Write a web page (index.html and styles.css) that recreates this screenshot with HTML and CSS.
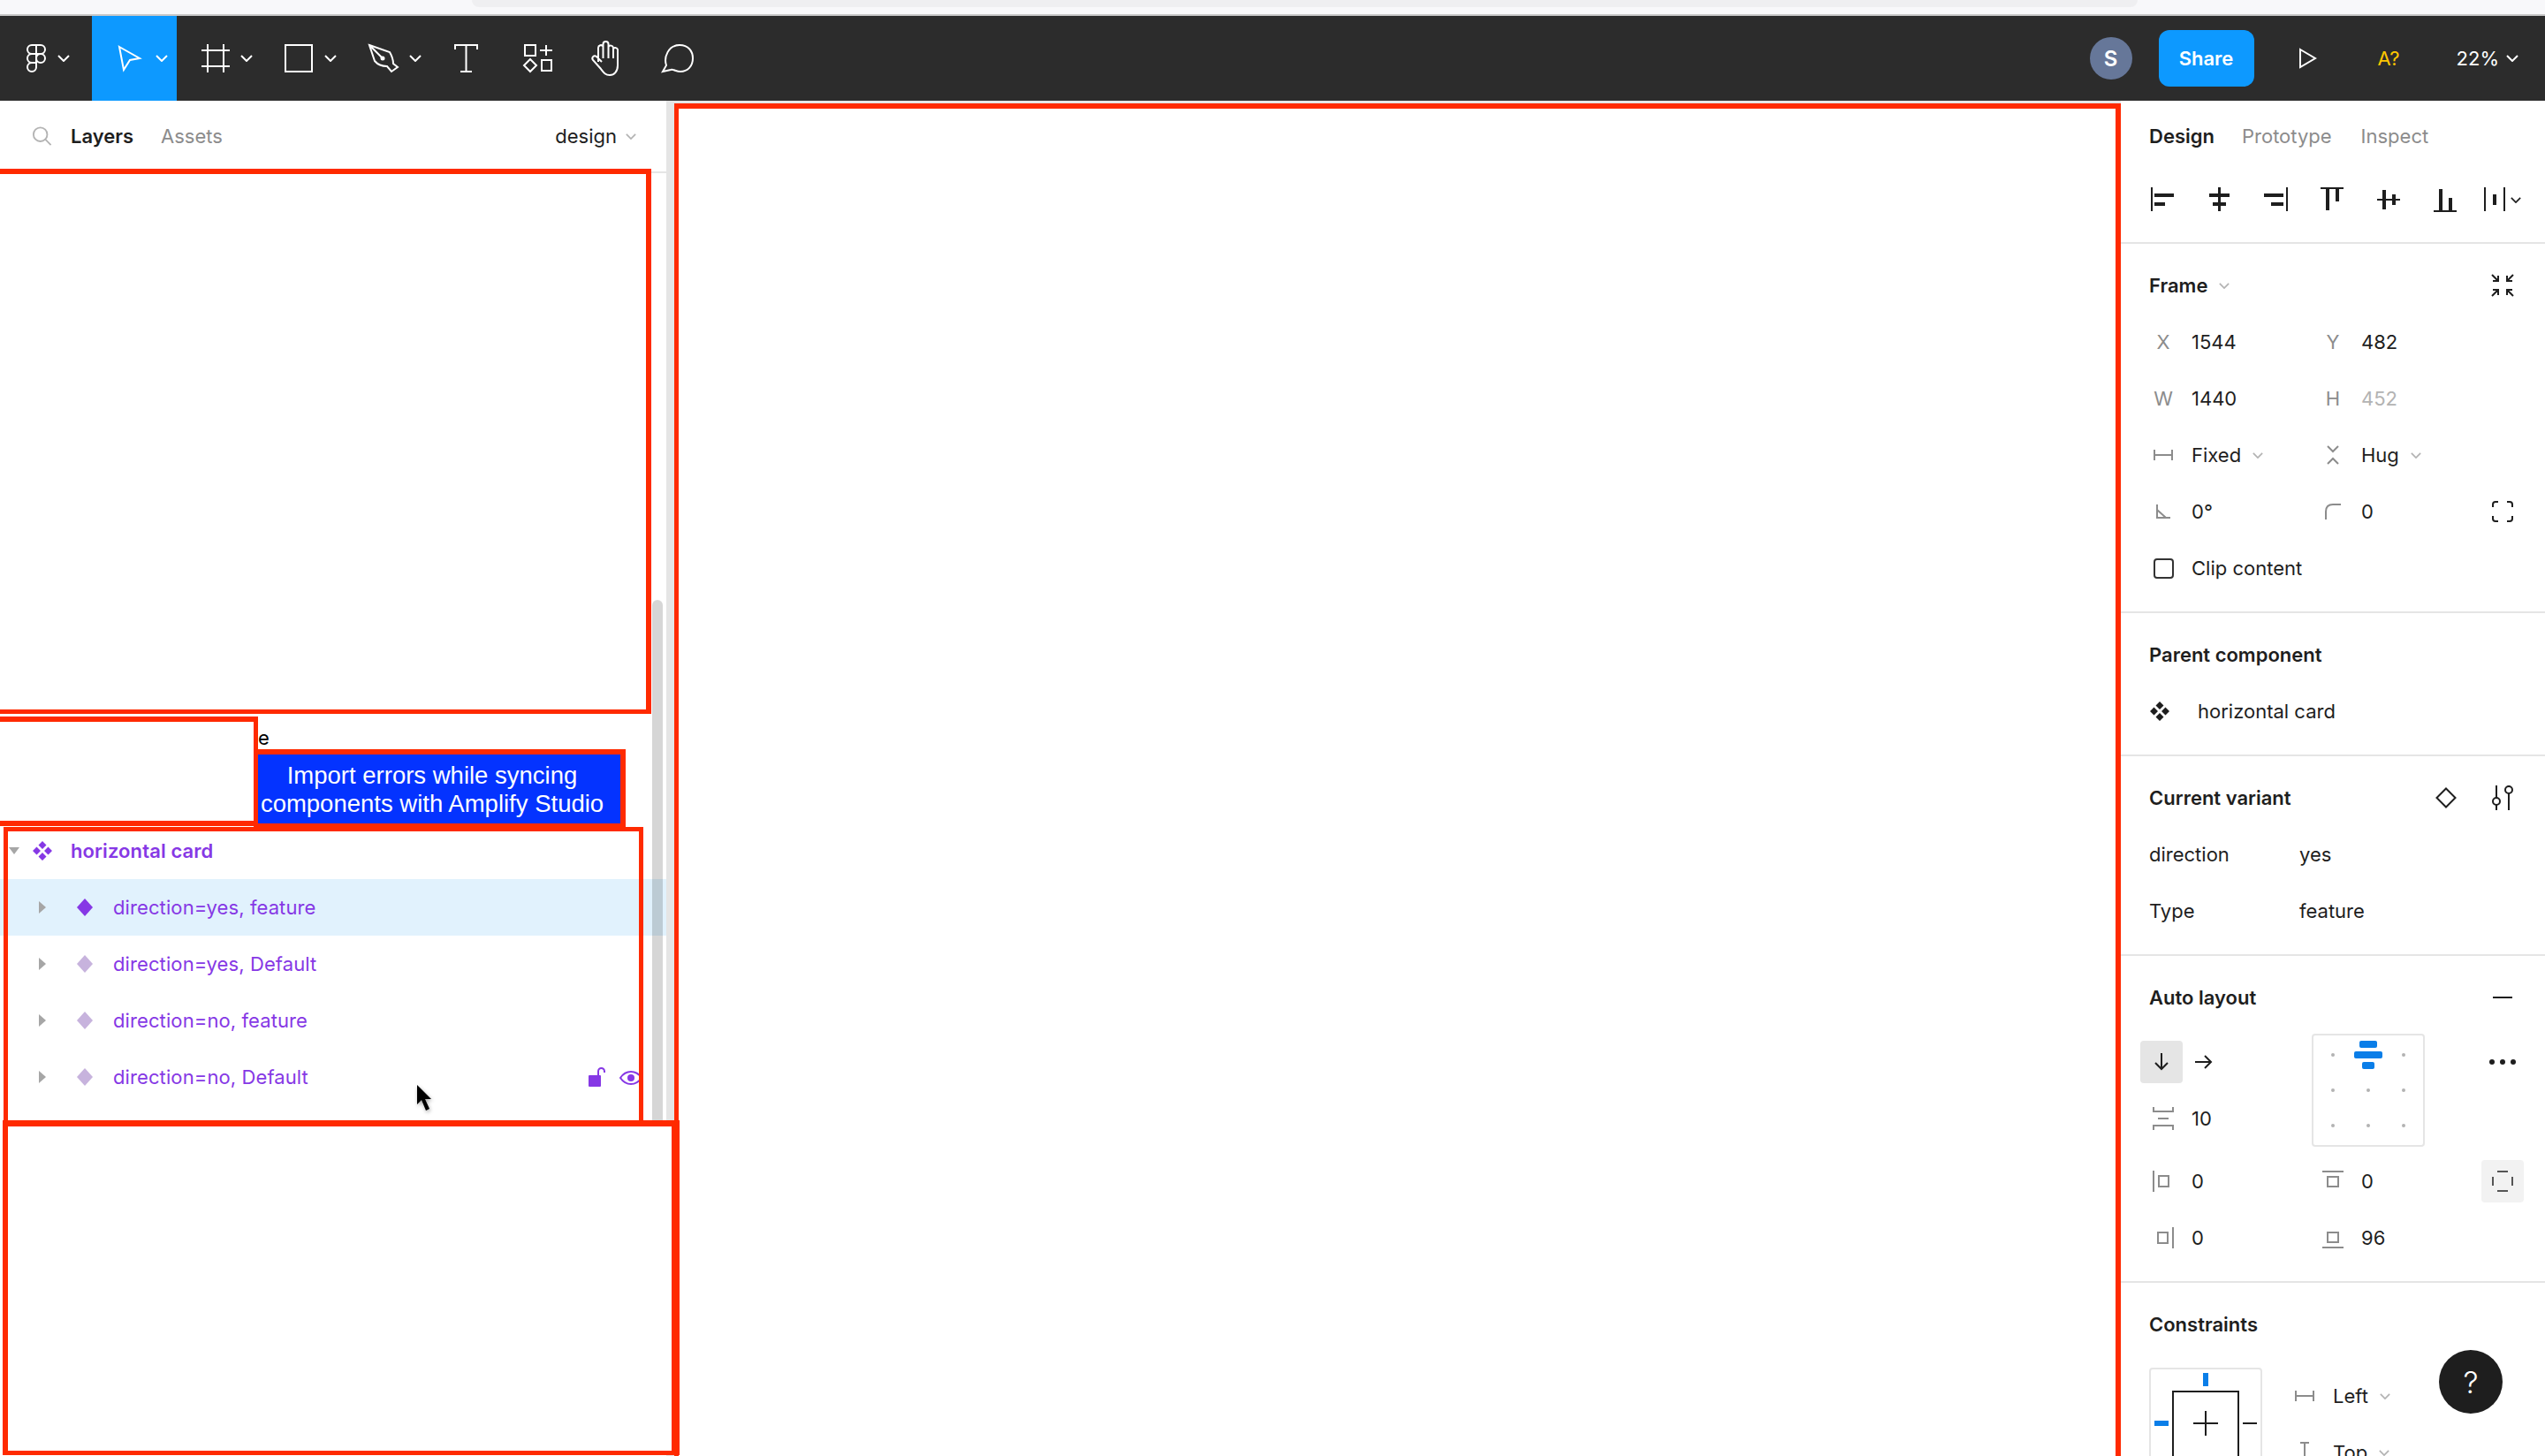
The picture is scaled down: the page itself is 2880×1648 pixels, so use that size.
FILE: index.html
```html
<!DOCTYPE html>
<html lang="en">
<head>
<meta charset="utf-8">
<title>Figma</title>
<link rel="stylesheet" href="styles.css">
</head>
<body>
<svg class="defs" width="0" height="0" aria-hidden="true">
  <symbol id="chev" viewBox="0 0 14 8"><path d="M1 1l6 6 6-6" fill="none" stroke="currentColor" stroke-width="2"/></symbol>
  <symbol id="tri-right" viewBox="0 0 8 14"><path d="M0 0l8 7-8 7z" fill="#a6a6a6"/></symbol>
  <symbol id="diamond" viewBox="0 0 20 20"><path d="M10 0l9 10-9 10-9-10z" fill="currentColor"/></symbol>
  <symbol id="comp" viewBox="0 0 22 22"><path d="M11 0l4.500 4.500L11 9 6.500 4.500zM11 13l4.500 4.500L11 22l-4.500-4.500zM4.500 6.500L9 11l-4.500 4.500L0 11zM17.500 6.500L22 11l-4.500 4.500L13 11z" fill="currentColor"/></symbol>
  <symbol id="hbar" viewBox="0 0 22 12"><path d="M1 0v12M21 0v12M1 6h20" fill="none" stroke="#8c8c8c" stroke-width="2"/></symbol>
</svg>
<div class="page">
  <div class="chrome"><div class="chrome-tab"></div></div>
  <header class="toolbar">
    <div class="tool tool-logo">
      <svg class="ic-logo" viewBox="0 0 24 32" fill="none" stroke="#fff" stroke-width="2"><path d="M12 1H7a5 5 0 0 0 0 10h5zM12 1h5a5 5 0 0 1 0 10h-5zM12 11H7a5 5 0 0 0 0 10h5zM12 21H7a5 5 0 1 0 5 5z"/><circle cx="17" cy="16" r="5"/></svg>
      <svg class="chev-w"><use href="#chev"/></svg>
    </div>
    <div class="tool tool-select">
      <svg class="ic-select" viewBox="0 0 26 30" fill="none" stroke="#fff" stroke-width="2"><path d="M1 2l23 13-11 2-7 11z"/></svg>
      <svg class="chev-w"><use href="#chev"/></svg>
    </div>
    <div class="tool tool-frame">
      <svg class="ic32" viewBox="0 0 32 32" fill="none" stroke="#fff" stroke-width="2"><path d="M7 0v32M25 0v32M0 7h32M0 25h32"/></svg>
      <svg class="chev-w"><use href="#chev"/></svg>
    </div>
    <div class="tool tool-rect">
      <svg class="ic32" viewBox="0 0 32 32" fill="none" stroke="#fff" stroke-width="2"><rect x="1" y="1" width="30" height="30"/></svg>
      <svg class="chev-w"><use href="#chev"/></svg>
    </div>
    <div class="tool tool-pen">
      <svg class="ic-pen" viewBox="0 0 34 32" fill="none" stroke="#fff" stroke-width="2"><path d="M1 1l23 8q4 7 4 13l5 4-7 5-5-6q-9 0-14-6zM1 1l14 14"/><circle cx="16" cy="16" r="2.500" fill="#fff" stroke="none"/></svg>
      <svg class="chev-w"><use href="#chev"/></svg>
    </div>
    <div class="tool tool-text">
      <svg class="ic-text" viewBox="0 0 27 32" fill="none" stroke="#fff" stroke-width="2"><path d="M1 6V1h25v5M13.500 1v30M7 31h13"/></svg>
    </div>
    <div class="tool tool-comp">
      <svg class="ic-comp" viewBox="0 0 33 32" fill="none" stroke="#fff" stroke-width="2"><rect x="2" y="1" width="12" height="12"/><path d="M26 1v12M19 7h14M8 17l7 7-7 7-7-7z"/><rect x="21" y="18" width="11" height="12"/></svg>
    </div>
    <div class="tool tool-hand">
      <svg class="ic-hand" viewBox="0 0 36 40" fill="none" stroke="#fff" stroke-width="2"><path d="M8 24V8a3 3 0 0 1 5.500-1.500V4a3 3 0 0 1 6 0v3a3 3 0 0 1 5.500 1v1a3 3 0 0 1 5 1v18c0 7-4 11-9 11s-7-3-10-7L2 22c-2-3 1-6 4-4l6 6M13.500 6.500V20M19.500 5v15M25 8v12"/></svg>
    </div>
    <div class="tool tool-talk">
      <svg class="ic-talk" viewBox="0 0 36 32" fill="none" stroke="#fff" stroke-width="2"><path d="M1 31l4-7C2 15 7 1 20 1c10 0 15 7 15 15 0 9-6 15-14 15-5 0-8-3-11-2z"/></svg>
    </div>
    <div class="toolbar-right">
      <div class="avatar">S</div>
      <div class="share">Share</div>
      <svg class="ic-play" viewBox="0 0 20 24" fill="none" stroke="#fff" stroke-width="2"><path d="M1 2l17 10L1 22z"/></svg>
      <div class="missing">A?</div>
      <div class="zoom-val">22%</div>
      <svg class="chev-w chev-zoom"><use href="#chev"/></svg>
    </div>
  </header>
  <main class="main">
    <aside class="layers">
      <div class="layers-head">
        <svg class="ic-search" viewBox="0 0 24 24" fill="none" stroke="#b3b3b3" stroke-width="2"><circle cx="10" cy="10" r="8.500"/><path d="M16 16l7 7"/></svg>
        <span class="tab-on">Layers</span>
        <span class="tab-off tab-assets">Assets</span>
        <span class="page-name">design</span>
        <svg class="chev-g"><use href="#chev"/></svg>
      </div>
      <div class="layers-space"></div>
      <div class="layer layer-plain">e</div>
      <div class="layer"></div>
      <div class="layer layer-parent">
        <svg class="tri-down" viewBox="0 0 12 8"><path d="M0 0h12L6 8z" fill="#a6a6a6"/></svg>
        <svg class="ic-parent"><use href="#comp"/></svg>
        <span>horizontal card</span>
      </div>
      <div class="layer layer-child is-selected">
        <svg class="tri"><use href="#tri-right"/></svg>
        <svg class="dia dia-on"><use href="#diamond"/></svg>
        <span>direction=yes, feature</span>
      </div>
      <div class="layer layer-child">
        <svg class="tri"><use href="#tri-right"/></svg>
        <svg class="dia"><use href="#diamond"/></svg>
        <span>direction=yes, Default</span>
      </div>
      <div class="layer layer-child">
        <svg class="tri"><use href="#tri-right"/></svg>
        <svg class="dia"><use href="#diamond"/></svg>
        <span>direction=no, feature</span>
      </div>
      <div class="layer layer-child">
        <svg class="tri"><use href="#tri-right"/></svg>
        <svg class="dia"><use href="#diamond"/></svg>
        <span>direction=no, Default</span>
        <svg class="ic-lock" viewBox="0 0 20 22"><rect x="0" y="9" width="14" height="13" rx="1" fill="#8638e5"/><path d="M11 9V4.500a3.500 3.500 0 0 1 7 0V6" fill="none" stroke="#8638e5" stroke-width="2"/></svg>
        <svg class="ic-eye" viewBox="0 0 26 16"><path d="M1 8c3-4.500 7-7 12-7s9 2.500 12 7c-3 4.500-7 7-12 7S4 12.500 1 8z" fill="none" stroke="#8638e5" stroke-width="2"/><circle cx="13" cy="8" r="4" fill="#8638e5"/></svg>
      </div>
    </aside>

    <section class="canvas"><div class="canvas-frame"></div></section>

    <aside class="props">
      <div class="props-tabs">
        <span class="tab-on">Design</span>
        <span class="tab-off tab-proto">Prototype</span>
        <span class="tab-off tab-inspect">Inspect</span>
      </div>
      <div class="align-row">
        <svg class="al" viewBox="0 0 30 30"><path d="M2 1h2v27H2zM6 8h22v4H6zM6 18h12v4H6z"/></svg>
        <svg class="al" viewBox="0 0 30 30"><path d="M14 1h3v27h-3zM4 8h23v4H4zM8 18h15v4H8z"/></svg>
        <svg class="al" viewBox="0 0 30 30"><path d="M27 1h2v27h-2zM2 8h22v4H2zM10 18h14v4H10z"/></svg>
        <svg class="al" viewBox="0 0 30 30"><path d="M2 1h26v2H2zM8 3h4v24H8zM19 3h4v14h-4z"/></svg>
        <svg class="al" viewBox="0 0 30 30"><path d="M2 14h26v2H2zM8 4h4v22H8zM19 9h4v12h-4z"/></svg>
        <svg class="al" viewBox="0 0 30 30"><path d="M2 27h26v2H2zM8 3h4v24H8zM19 13h4v14h-4z"/></svg>
        <svg class="al al-dist" viewBox="0 0 30 30"><path d="M3 1h2v27H3zM25 1h2v27h-2zM13 9h4v12h-4z"/></svg>
        <svg class="chev-k"><use href="#chev"/></svg>
      </div>

      <section class="sect sect-frame">
        <div class="sect-head"><span class="h">Frame</span><svg class="chev-g chev-head"><use href="#chev"/></svg>
          <svg class="sect-act ic-collapse" viewBox="0 0 26 26" fill="none" stroke="#1e1e1e" stroke-width="2"><path d="M1 1l7 7M8 2v6H2M25 1l-7 7M18 2v6h6M1 25l7-7M8 24v-6H2M25 25l-7-7M18 24v-6h6"/></svg>
        </div>
        <div class="prow">
          <div class="pcell"><span class="lab">X</span><span class="val">1544</span></div>
          <div class="pcell"><span class="lab">Y</span><span class="val">482</span></div>
        </div>
        <div class="prow">
          <div class="pcell"><span class="lab">W</span><span class="val">1440</span></div>
          <div class="pcell"><span class="lab">H</span><span class="val val-dim">452</span></div>
        </div>
        <div class="prow">
          <div class="pcell"><span class="lab"><svg class="i-hbar"><use href="#hbar"/></svg></span><span class="val">Fixed</span><svg class="chev-g chev-val"><use href="#chev"/></svg></div>
          <div class="pcell"><span class="lab"><svg class="i-hug" viewBox="0 0 14 22" fill="none" stroke="#8c8c8c" stroke-width="2"><path d="M1 1l6 6 6-6M1 21l6-6 6 6"/></svg></span><span class="val">Hug</span><svg class="chev-g chev-val"><use href="#chev"/></svg></div>
        </div>
        <div class="prow">
          <div class="pcell"><span class="lab"><svg class="i-angle" viewBox="0 0 16 16" fill="none" stroke="#8c8c8c" stroke-width="2"><path d="M1 0v15h15M1 6l10 9"/></svg></span><span class="val">0°</span></div>
          <div class="pcell"><span class="lab"><svg class="i-corner" viewBox="0 0 18 18" fill="none" stroke="#8c8c8c" stroke-width="2"><path d="M1 18V9q0-8 8-8h9"/></svg></span><span class="val">0</span></div>
          <div class="pcell-icon"><svg class="i-corners" viewBox="0 0 24 24" fill="none" stroke="#1e1e1e" stroke-width="2"><path d="M1 7V4q0-3 3-3h3M17 1h3q3 0 3 3v3M23 17v3q0 3-3 3h-3M7 23H4q-3 0-3-3v-3"/></svg></div>
        </div>
        <div class="prow">
          <div class="pcell pcell-wide"><span class="lab"><span class="check"></span></span><span class="val">Clip content</span></div>
        </div>
      </section>

      <section class="sect">
        <div class="sect-head"><span class="h">Parent component</span></div>
        <div class="parent-row"><svg class="i-comp"><use href="#comp"/></svg><span class="val">horizontal card</span></div>
      </section>

      <section class="sect">
        <div class="sect-head"><span class="h">Current variant</span>
          <svg class="i-diamond" viewBox="0 0 24 24" fill="none" stroke="#1e1e1e" stroke-width="2"><path d="M12 1.500L22.500 12 12 22.500 1.500 12z"/></svg>
          <svg class="i-sliders" viewBox="0 0 24 28" fill="none" stroke="#1e1e1e" stroke-width="2"><path d="M5 0v14M5 22v6M19 0v1M19 9v19"/><circle cx="5" cy="18" r="4"/><circle cx="19" cy="5" r="4"/></svg>
        </div>
        <div class="var-row"><span class="val">direction</span><span class="val">yes</span></div>
        <div class="var-row"><span class="val">Type</span><span class="val">feature</span></div>
      </section>

      <section class="sect">
        <div class="sect-head"><span class="h">Auto layout</span>
          <svg class="sect-act i-minus" viewBox="0 0 22 2"><path d="M0 0h22v2H0z" fill="#1e1e1e"/></svg>
        </div>
        <div class="al-top">
          <div class="al-left">
            <div class="dir-row">
              <div class="dir-btn"><svg class="i-down" viewBox="0 0 16 20" fill="none" stroke="#1e1e1e" stroke-width="2"><path d="M8 0v18M1 11l7 7 7-7"/></svg></div>
              <svg class="i-right" viewBox="0 0 20 16" fill="none" stroke="#1e1e1e" stroke-width="2"><path d="M0 8h18M11 1l7 7-7 7"/></svg>
            </div>
            <div class="pcell gap-row"><span class="lab"><svg class="i-gap" viewBox="0 0 24 26" fill="none" stroke="#8c8c8c" stroke-width="2"><path d="M1 0v5h22V0M1 26v-5h22v5M6 13h12"/></svg></span><span class="val">10</span></div>
          </div>
          <div class="align-box">
            <i></i><div class="bars"><b class="b1"></b><b class="b2"></b><b class="b3"></b></div><i></i>
            <i></i><i></i><i></i>
            <i></i><i></i><i></i>
          </div>
          <div class="dots"><u></u><u></u><u></u></div>
        </div>
        <div class="prow">
          <div class="pcell"><span class="lab"><svg class="i-pad" viewBox="0 0 24 24" fill="none" stroke="#8c8c8c" stroke-width="2"><path d="M1 0v24"/><rect x="7" y="6" width="11" height="12"/></svg></span><span class="val">0</span></div>
          <div class="pcell"><span class="lab"><svg class="i-pad" viewBox="0 0 24 24" fill="none" stroke="#8c8c8c" stroke-width="2"><path d="M0 1h24"/><rect x="6" y="7" width="12" height="11"/></svg></span><span class="val">0</span></div>
          <div class="pad-btn"><svg class="i-pads" viewBox="0 0 24 24" fill="none" stroke="#555" stroke-width="2"><path d="M6 1h12M6 23h12M1 7v10M23 7v10"/></svg></div>
        </div>
        <div class="prow">
          <div class="pcell"><span class="lab"><svg class="i-pad" viewBox="0 0 24 24" fill="none" stroke="#8c8c8c" stroke-width="2"><path d="M23 0v24"/><rect x="6" y="6" width="11" height="12"/></svg></span><span class="val">0</span></div>
          <div class="pcell"><span class="lab"><svg class="i-pad" viewBox="0 0 24 24" fill="none" stroke="#8c8c8c" stroke-width="2"><path d="M0 23h24"/><rect x="6" y="6" width="12" height="11"/></svg></span><span class="val">96</span></div>
        </div>
      </section>

      <section class="sect sect-last">
        <div class="sect-head"><span class="h">Constraints</span></div>
        <div class="cons">
          <div class="cons-box">
            <div class="cons-inner"><span class="plus-h"></span><span class="plus-v"></span></div>
            <span class="c-top"></span><span class="c-left"></span><span class="c-right"></span>
          </div>
          <div class="cons-list">
            <div class="pcell"><span class="lab"><svg class="i-hbar"><use href="#hbar"/></svg></span><span class="val">Left</span><svg class="chev-g chev-val"><use href="#chev"/></svg></div>
            <div class="pcell"><span class="lab"><svg class="i-tee" viewBox="0 0 10 24" fill="none" stroke="#8c8c8c" stroke-width="2"><path d="M0 1h10M5 1v23"/></svg></span><span class="val">Top</span><svg class="chev-g chev-val"><use href="#chev"/></svg></div>
          </div>
        </div>
      </section>
    </aside>
  </main>

  <div class="anno anno-top"></div>
  <div class="anno anno-mid"></div>
  <div class="anno anno-title">Import errors while syncing<br>components with Amplify Studio</div>
  <div class="scroll-thumb"></div>
  <div class="anno anno-card"></div>
  <div class="anno anno-bottom"></div>
  <svg class="cursor" viewBox="0 0 18 32"><path d="M1 1v22l5-5 5 12 4-2-5-11h7z" fill="#000"/></svg>
  <div class="help">?</div>
</div>
</body>
</html>
```
FILE: styles.css
```css
* { box-sizing: border-box; }
html, body { margin: 0; padding: 0; background: #fff; height: 1648px; overflow: hidden; }
body { font-family: Inter, "Noto Sans", sans-serif; font-size: 22px; color: #1e1e1e; }
.defs { position: absolute; }
svg { display: block; flex: none; overflow: visible; }
.page { position: relative; width: 2880px; height: 1648px; overflow: hidden; display: flex; flex-direction: column; }

.chrome { height: 18px; background: #f8f8fa; border-bottom: 2px solid #c8c8c8; flex: none; }
.chrome-tab { margin-left: 534px; width: 1885px; height: 8px; background: #efeff1; border-radius: 0 0 10px 10px; }

.toolbar { height: 96px; background: #2c2c2c; display: flex; align-items: center; flex: none; color: #fff; }
.tool { height: 96px; display: flex; align-items: center; flex: none; }
.tool-logo { width: 104px; padding-left: 29px; gap: 12px; }
.tool-select { width: 96px; padding-left: 30px; gap: 16px; background: #0d99ff; }
.tool-frame { width: 94px; padding-left: 28px; gap: 12px; }
.tool-rect { width: 94px; padding-left: 28px; gap: 13px; }
.tool-pen { width: 97px; padding-left: 29px; gap: 12px; }
.tool-text { width: 85px; justify-content: center; }
.tool-comp { width: 77px; justify-content: center; }
.tool-hand { width: 80px; justify-content: center; }
.tool-talk { width: 80px; justify-content: center; }
.ic-logo { width: 24px; height: 32px; }
.ic-select { width: 26px; height: 30px; }
.ic32 { width: 32px; height: 32px; }
.ic-pen { width: 34px; height: 32px; }
.ic-text { width: 27px; height: 32px; }
.ic-comp { width: 33px; height: 32px; }
.ic-hand { width: 36px; height: 40px; }
.ic-talk { width: 36px; height: 32px; }
.chev-w { width: 14px; height: 8px; color: #fff; }
.chev-g { width: 12px; height: 7px; color: #b3b3b3; }
.chev-k { width: 12px; height: 7px; color: #1e1e1e; }

.toolbar-right { margin-left: auto; display: flex; align-items: center; padding-right: 30px; }
.avatar { width: 48px; height: 48px; border-radius: 50%; background: #667799; display: flex; align-items: center; justify-content: center; font-weight: 600; font-size: 24px; color: #fff; }
.share { width: 108px; height: 64px; margin-left: 30px; border-radius: 12px; background: #0d99ff; display: flex; align-items: center; justify-content: center; font-weight: 600; color: #fff; }
.ic-play { width: 20px; height: 24px; margin-left: 51px; }
.missing { margin-left: 69px; color: #ffc700; }
.zoom-val { margin-left: 64px; color: #fff; }
.chev-zoom { margin-left: 8px; }

.main { height: 1534px; display: flex; overflow: hidden; flex: none; }

.layers { width: 763px; flex: none; border-right: 9px solid #e5e5e5; display: flex; flex-direction: column; background: #fff; }
.layers-head { height: 82px; flex: none; display: flex; align-items: center; padding: 0 0 0 36px; border-bottom: 2px solid #e5e5e5; }
.ic-search { width: 23px; height: 22px; }
.tab-on { font-weight: 600; color: #1e1e1e; }
.tab-off { color: #8c8c8c; }
.layers-head .tab-on { margin-left: 21px; }
.tab-assets { margin-left: 31px; }
.page-name { margin-left: auto; color: #1e1e1e; }
.layers-head .chev-g { margin: 0 34px 0 10px; }
.layers-space { height: 607px; flex: none; }
.layer { height: 64px; flex: none; display: flex; align-items: center; color: #8638e5; position: relative; letter-spacing: .1px; }
.layer-plain { padding-left: 292px; color: #000; }
.layer-parent { font-weight: 600; padding-left: 10px; }
.tri-down { width: 12px; height: 8px; }
.ic-parent { width: 22px; height: 22px; margin: 0 21px 0 15px; color: #8638e5; }
.layer-child { padding-left: 44px; }
.is-selected { background: #e1f2fd; }
.tri { width: 8px; height: 14px; }
.dia { width: 20px; height: 20px; margin: 0 22px 0 34px; color: #c7b3dd; }
.dia-on { color: #8638e5; }
.ic-lock { width: 20px; height: 22px; position: absolute; left: 666px; top: 21px; }
.ic-eye { width: 26px; height: 16px; position: absolute; left: 701px; top: 25px; }

.canvas { flex: 1; min-width: 0; background: #e5e5e5; padding-top: 3px; }
.canvas-frame { height: 1700px; background: #fff; border: solid #ff2a00; border-width: 6px 6px 6px 5px; }

.props { width: 480px; flex: none; background: #fff; }
.props-tabs { height: 80px; display: flex; align-items: center; padding: 0 0 0 32px; }
.tab-proto { margin-left: 31px; }
.tab-inspect { margin-left: 33px; }
.align-row { height: 82px; padding: 0 0 16px 32px; display: flex; align-items: center; border-bottom: 2px solid #e5e5e5; }
.al { width: 30px; height: 30px; margin-right: 34px; fill: #1e1e1e; }
.al-dist { margin: 0 0 0 -8px; }
.align-row .chev-k { margin-left: 3px; }

.sect { padding: 16px 0; border-bottom: 2px solid #e5e5e5; }
.sect-last { border-bottom: 0; }
.sect-head { height: 64px; display: flex; align-items: center; padding: 0 24px 2px 32px; }
.h { font-weight: 600; }
.chev-head { margin-left: 13px; }
.sect-act { margin-left: auto; margin-right: 11px; }
.ic-collapse { width: 26px; height: 26px; }
.i-minus { width: 22px; height: 2px; margin-right: 13px; }
.prow { height: 64px; display: grid; grid-template-columns: 192px 192px 48px; padding: 0 0 2px 24px; align-items: center; }
.pcell { display: flex; align-items: center; }
.pcell-wide { grid-column: span 2; }
.pcell-icon { display: flex; justify-content: center; }
.lab { width: 48px; margin-right: 8px; flex: none; display: flex; justify-content: center; color: #8c8c8c; }
.val { color: #1e1e1e; }
.val-dim { color: #b3b3b3; }
.chev-val { margin-left: 13px; }
.i-hbar { width: 22px; height: 12px; }
.i-hug { width: 14px; height: 22px; }
.i-angle { width: 16px; height: 16px; }
.i-corner { width: 18px; height: 18px; }
.i-corners { width: 24px; height: 24px; }
.check { width: 23px; height: 23px; border: 2px solid #333; border-radius: 4px; display: block; }

.parent-row { height: 64px; display: flex; align-items: center; padding: 0 0 2px 33px; }
.i-comp { width: 22px; height: 22px; margin-right: 32px; color: #1e1e1e; }

.i-diamond { width: 24px; height: 24px; margin-left: auto; }
.i-sliders { width: 24px; height: 28px; margin: 0 12px 0 40px; }
.var-row { height: 64px; display: grid; grid-template-columns: 170px 1fr; padding: 0 0 2px 32px; align-items: center; }

.al-top { margin: 8px 0; height: 128px; padding-left: 22px; display: flex; }
.al-left { width: 194px; flex: none; padding-top: 8px; }
.dir-row { display: flex; align-items: center; height: 48px; margin-bottom: 8px; }
.dir-btn { width: 48px; height: 48px; background: #e5e5e5; border-radius: 4px; display: flex; align-items: center; justify-content: center; }
.i-down { width: 16px; height: 20px; }
.i-right { width: 20px; height: 16px; margin-left: 14px; }
.gap-row { height: 64px; margin-left: 2px; }
.i-gap { width: 24px; height: 26px; }
.align-box { width: 128px; height: 128px; border: 2px solid #e5e5e5; border-radius: 4px; display: grid; grid-template-columns: repeat(3, 40px); grid-template-rows: repeat(3, 40px); padding: 2px; place-items: center; }
.align-box i { width: 4px; height: 4px; border-radius: 50%; background: #b3b3b3; display: block; }
.bars { display: flex; flex-direction: column; align-items: center; gap: 4px; }
.bars b { display: block; height: 8px; border-radius: 2px; background: #0a7ee8; }
.b1 { width: 20px; }
.b2 { width: 32px; }
.b3 { width: 14px; }
.dots { display: flex; gap: 6px; margin-left: 73px; height: 64px; align-items: center; }
.dots u { display: block; width: 6px; height: 6px; border-radius: 50%; background: #1e1e1e; }
.i-pad { width: 24px; height: 24px; }
.pad-btn { width: 48px; height: 48px; background: #f2f2f2; border-radius: 4px; display: flex; align-items: center; justify-content: center; }
.i-pads { width: 24px; height: 24px; }

.cons { display: flex; margin-top: 16px; padding-left: 32px; }
.cons-box { width: 128px; height: 160px; border: 2px solid #e5e5e5; border-radius: 4px; position: relative; flex: none; }
.cons-inner { position: absolute; left: 24px; top: 24px; width: 76px; height: 120px; border: 2px solid #1e1e1e; }
.plus-h { position: absolute; left: 22px; top: 34px; width: 28px; height: 2px; background: #1e1e1e; }
.plus-v { position: absolute; left: 35px; top: 21px; width: 2px; height: 28px; background: #1e1e1e; }
.c-top { position: absolute; left: 59px; top: 4px; width: 6px; height: 15px; background: #0a7ee8; }
.c-left { position: absolute; left: 4px; top: 58px; width: 16px; height: 6px; background: #0a7ee8; }
.c-right { position: absolute; left: 104px; top: 60px; width: 16px; height: 2px; background: #1e1e1e; }
.cons-list { margin-left: 24px; }
.cons-list .pcell { height: 64px; }
.i-tee { width: 10px; height: 24px; }

.anno { position: absolute; border: solid #ff2a00; }
.anno-top { left: -10px; top: 191px; width: 747px; height: 617px; border-width: 6px 6px 5px; background: #fff; }
.anno-mid { left: -10px; top: 811px; width: 302px; height: 124px; border-width: 6px 5px; background: #fff; }
.anno-title { left: 287px; top: 848px; width: 421px; height: 88px; border-width: 6px 6px 4px 5px; background: #0433ff; color: #fff; font-family: "Liberation Sans", Arial, sans-serif; font-size: 27.5px; line-height: 32px; text-align: center; padding: 8px 16px 0 0; white-space: nowrap; }
.anno-card { left: 4px; top: 936px; width: 724px; height: 339px; border-width: 5px; }
.anno-bottom { left: 3px; top: 1268px; width: 766px; height: 379px; border-width: 7px 9px 5px 6px; background: #fff; }
.scroll-thumb { position: absolute; left: 738px; top: 679px; width: 12px; height: 591px; background: rgba(0,0,0,.16); border-radius: 6px 6px 0 0; }
.cursor { position: absolute; left: 471px; top: 1227px; width: 18px; height: 32px; filter: drop-shadow(1px 2px 2px rgba(0,0,0,.35)); }
.help { position: absolute; left: 2760px; top: 1528px; width: 72px; height: 72px; border-radius: 50%; background: #1e1e1e; color: #fff; font-weight: 300; font-size: 34px; display: flex; align-items: center; justify-content: center; }
```
